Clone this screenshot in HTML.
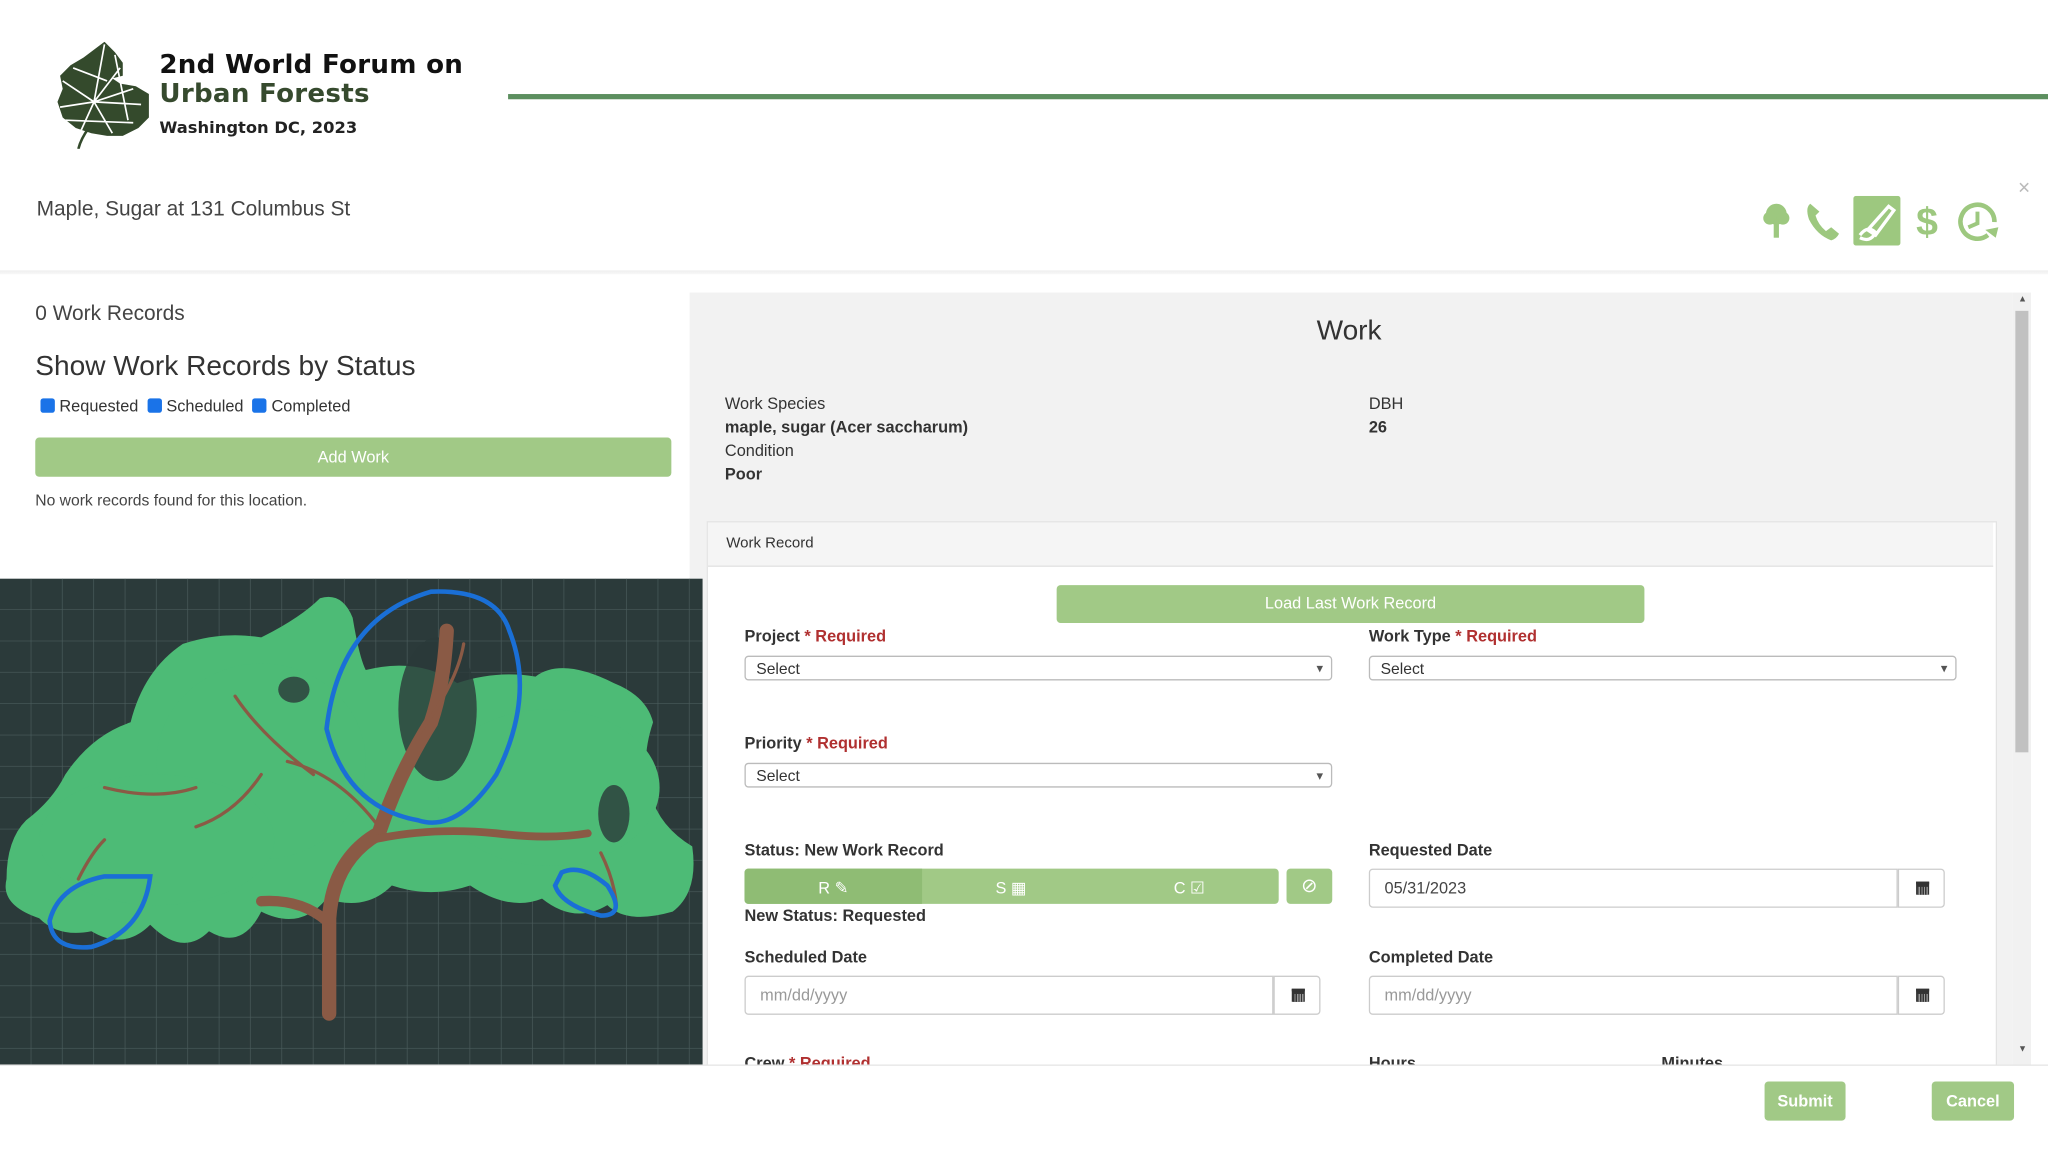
<!DOCTYPE html>
<html><head><meta charset="utf-8"><style>
html,body{margin:0;padding:0;background:#fff;overflow:hidden;width:2048px;height:1152px}
#s{position:absolute;left:0;top:0;width:1568px;height:882px;transform:scale(1.306122);transform-origin:0 0;font-family:"Liberation Sans",Arial,sans-serif;color:#333}
.a{position:absolute}
.lbl{font-size:12.5px;font-weight:bold;color:#333}
.req{color:#b03030}
.sel{position:absolute;height:19px;border:1px solid #bbb;border-radius:3px;background:#fff;font-size:12px;line-height:19px;padding-left:8px;box-sizing:border-box;color:#333}
.sel:after{content:"▾";position:absolute;right:6px;top:0;font-size:10px;color:#555}
.inp{position:absolute;height:30px;border:1px solid #ccc;border-radius:3px 0 0 3px;background:#fff;font-size:12.5px;line-height:28px;padding-left:11px;box-sizing:border-box;color:#555}
.cal{position:absolute;width:36px;height:30px;border:1px solid #ccc;border-radius:0 3px 3px 0;background:#fff;box-sizing:border-box}
.cal i{position:absolute;left:13px;top:9px;width:10px;height:10px;background:#333;border-top:2px solid #333;box-sizing:border-box}
.cal i:after{content:"";position:absolute;left:1px;top:2px;width:8px;height:6px;background:repeating-linear-gradient(90deg,#333 0 1px,#999 1px 2px)}
.btn{position:absolute;background:#a1c986;color:#fff;font-size:12.5px;text-align:center;border-radius:3px}
</style></head><body><div id="s">
<!-- logo -->
<svg class="a" style="left:42px;top:32px" width="74" height="82" viewBox="0 0 74 82">
<path d="M22 12 L30 6 L38 0 L46 8 L52 16 L52 26 L44 28 L50 32 L62 34 L72 40 L72 58 L64 66 L52 72 L40 72 L28 70 L16 66 L6 58 L2 46 L6 36 L4 26 L12 18 Z" fill="#344a2c"/>
<g stroke="#fff" stroke-width="1.3" fill="none"><path d="M30 46 L38 2 M30 46 L6 30 M30 46 L4 50 M30 46 L20 68 M30 46 L44 70 M30 46 L66 48 M30 46 L60 36 M30 46 L50 20 M14 20 L40 30 M8 60 L60 62 M46 10 L56 60"/></g>
<path d="M26 66 Q20 74 18 82" stroke="#344a2c" stroke-width="2" fill="none"/></svg>
<div class="a" style="left:122px;top:38px;font-size:20px;font-weight:900;color:#111;font-family:'DejaVu Sans',sans-serif;line-height:22px;letter-spacing:.2px">2nd World Forum on<br><span style="color:#364a2e">Urban Forests</span></div>
<div class="a" style="left:122px;top:90px;font-size:12.5px;font-weight:bold;color:#222;font-family:'DejaVu Sans',sans-serif">Washington DC, 2023</div>
<div class="a" style="left:389px;top:72px;width:1179px;height:4px;background:#5c8f5f"></div>
<div class="a" style="left:28px;top:152px;font-size:16px;color:#444">Maple, Sugar at 131 Columbus St</div>
<!-- icons -->
<svg class="a" style="left:1346px;top:150px" width="190" height="40" viewBox="0 0 190 40" fill="#9dc87f">
<circle cx="14" cy="14" r="8"/><circle cx="9" cy="17" r="5"/><circle cx="19" cy="17" r="5"/><rect x="12" y="18" width="4" height="14"/>
<path d="M40 6 Q36 9 39 18 Q45 30 56 34 Q60 33 62 29 L56 24 L52 27 Q46 22 44 15 L47 12 Z"/>
<rect x="73" y="0" width="36" height="38" rx="2"/>
<g stroke="#fff" stroke-width="2.5" fill="none"><path d="M84 26 L100 8 L104 11 L90 30 Z"/><path d="M78 30 Q84 22 90 28 Q86 36 78 32"/></g>
<text x="121" y="30" font-size="30" font-weight="bold" font-family="Liberation Sans">$</text>
<path d="M181 20 A13 13 0 1 0 176 30" stroke="#9dc87f" stroke-width="3.5" fill="none"/><path d="M174 26 L182 32 L184 24 Z"/><path d="M168 12 L168 21 L161 24" stroke="#9dc87f" stroke-width="3" fill="none"/>
</svg>
<div class="a" style="left:1545px;top:136px;font-size:16px;color:#bbb">×</div>
<div class="a" style="left:0;top:207px;width:1568px;height:3px;background:linear-gradient(#eee,#f8f8f8)"></div>
<!-- left -->
<div class="a" style="left:27px;top:232px;font-size:16px;color:#444">0 Work Records</div>
<div class="a" style="left:27px;top:268px;font-size:21.5px;color:#333">Show Work Records by Status</div>
<div class="a" style="left:31px;top:303px;font-size:12.5px;color:#333;line-height:16px">
<span style="display:inline-block;width:11px;height:11px;background:#1a73e8;border-radius:2px;vertical-align:-1px"></span> Requested &nbsp;<span style="display:inline-block;width:11px;height:11px;background:#1a73e8;border-radius:2px;vertical-align:-1px"></span> Scheduled &nbsp;<span style="display:inline-block;width:11px;height:11px;background:#1a73e8;border-radius:2px;vertical-align:-1px"></span> Completed</div>
<div class="btn" style="left:27px;top:335px;width:487px;height:30px;line-height:30px">Add Work</div>
<div class="a" style="left:27px;top:376px;font-size:12px;color:#444">No work records found for this location.</div>
<!-- right panel -->
<div class="a" style="left:528px;top:224px;width:1013px;height:591px;background:#f2f2f2"></div>
<div class="a" style="left:1541px;top:224px;width:14px;height:591px;background:#f1f1f1"></div>
<div class="a" style="left:1543px;top:238px;width:10px;height:338px;background:#c1c1c1"></div>
<div class="a" style="left:1545px;top:226px;font-size:7px;color:#555">▲</div>
<div class="a" style="left:1545px;top:800px;font-size:7px;color:#555">▼</div>
<div class="a" style="left:1008px;top:241px;font-size:21.5px;color:#333">Work</div>
<div class="a" style="left:555px;top:300px;font-size:12.5px;line-height:18px">Work Species<br><b>maple, sugar (Acer saccharum)</b><br>Condition<br><b>Poor</b></div>
<div class="a" style="left:1048px;top:300px;font-size:12.5px;line-height:18px">DBH<br><b>26</b></div>
<div class="a" style="left:541px;top:399px;width:986px;height:420px;background:#fff;border:1px solid #e3e3e3"></div>
<div class="a" style="left:542px;top:400px;width:984px;height:33px;background:#f5f5f5;border-bottom:1px solid #e3e3e3"></div>
<div class="a" style="left:556px;top:410px;font-size:11.5px;color:#333">Work Record</div>
<div class="btn" style="left:809px;top:448px;width:450px;height:29px;line-height:29px">Load Last Work Record</div>
<div class="a lbl" style="left:570px;top:480px">Project <span class="req">* Required</span></div>
<div class="a lbl" style="left:1048px;top:480px">Work Type <span class="req">* Required</span></div>
<div class="sel" style="left:570px;top:502px;width:450px">Select</div>
<div class="sel" style="left:1048px;top:502px;width:450px">Select</div>
<div class="a lbl" style="left:570px;top:562px">Priority <span class="req">* Required</span></div>
<div class="sel" style="left:570px;top:584px;width:450px">Select</div>
<div class="a lbl" style="left:570px;top:644px">Status: New Work Record</div>
<div class="a lbl" style="left:1048px;top:644px">Requested Date</div>
<div class="btn" style="left:570px;top:665px;width:409px;height:27px"></div>
<div class="a" style="left:570px;top:665px;width:136px;height:27px;background:#8fbc74;border-radius:3px 0 0 3px"></div>
<div class="a" style="left:570px;top:672px;width:136px;text-align:center;color:#fff;font-size:12.5px">R ✎</div>
<div class="a" style="left:706px;top:672px;width:136px;text-align:center;color:#fff;font-size:12.5px">S ▦</div>
<div class="a" style="left:842px;top:672px;width:137px;text-align:center;color:#fff;font-size:12.5px">C ☑</div>
<div class="btn" style="left:985px;top:665px;width:35px;height:27px;line-height:27px;font-size:15px">⊘</div>
<div class="a lbl" style="left:570px;top:694px">New Status: Requested</div>
<div class="inp" style="left:1048px;top:665px;width:405px;color:#444">05/31/2023</div><div class="cal" style="left:1453px;top:665px"><i></i></div>
<div class="a lbl" style="left:570px;top:726px">Scheduled Date</div>
<div class="a lbl" style="left:1048px;top:726px">Completed Date</div>
<div class="inp" style="left:570px;top:747px;width:405px;color:#999">mm/dd/yyyy</div><div class="cal" style="left:975px;top:747px"><i></i></div>
<div class="inp" style="left:1048px;top:747px;width:405px;color:#999">mm/dd/yyyy</div><div class="cal" style="left:1453px;top:747px"><i></i></div>
<div class="a lbl" style="left:570px;top:807px">Crew <span class="req">* Required</span></div>
<div class="a lbl" style="left:1048px;top:807px">Hours</div>
<div class="a lbl" style="left:1272px;top:807px">Minutes</div>
<!-- tree (over panel) -->
<svg class="a" style="left:0;top:443px" width="538" height="372" viewBox="0 0 538 372">
<defs><pattern id="g" width="24" height="24" patternUnits="userSpaceOnUse"><path d="M24 0V24H0" stroke="#4a5c5c" stroke-width="1" fill="none"/></pattern></defs>
<rect width="538" height="372" fill="#2b3a3a"/><rect width="538" height="372" fill="url(#g)"/>
<g fill="#4dbb76">
<path d="M5 230 Q5 200 20 185 Q40 170 50 150 Q70 120 100 110 Q110 70 140 50 Q170 40 200 45 Q230 30 245 15 Q262 10 270 30 Q275 60 280 70 Q320 60 350 80 Q380 70 410 75 Q430 60 470 80 Q495 90 500 110 Q490 140 498 165 Q505 190 530 205 Q535 240 515 255 Q480 265 465 250 Q440 265 415 245 Q390 255 360 235 Q330 245 300 235 Q280 255 250 245 Q230 270 200 255 Q185 285 160 270 Q140 290 115 265 Q95 285 70 270 Q45 275 30 260 Q0 250 5 230Z"/>
<ellipse cx="200" cy="140" rx="80" ry="75"/><ellipse cx="420" cy="160" rx="85" ry="60"/><ellipse cx="120" cy="200" rx="90" ry="50"/>
</g>
<g fill="#2b3a3a" opacity=".8"><ellipse cx="335" cy="100" rx="30" ry="55"/><ellipse cx="470" cy="180" rx="12" ry="22"/><ellipse cx="225" cy="85" rx="12" ry="10"/></g>
<g stroke="#8a5a45" fill="none" stroke-linecap="round">
<path d="M252 333 L252 260 Q255 215 290 195 Q305 150 330 110 Q340 80 342 40" stroke-width="11"/>
<path d="M250 262 Q230 245 200 247" stroke-width="8"/><path d="M285 200 Q330 190 380 195 Q420 200 450 195" stroke-width="6"/>
<path d="M290 190 Q260 150 220 140 M240 150 Q200 120 180 90 M320 120 Q350 80 355 50 M150 160 Q120 170 80 160 M60 230 Q70 210 80 200 M460 210 Q470 230 472 250 M200 150 Q180 180 150 190" stroke-width="2.5"/>
</g>
<g stroke="#1a6fd6" stroke-width="3.5" fill="none">
<path d="M330 10 Q380 8 390 40 Q410 90 380 150 Q350 195 320 185 Q265 175 250 115 Q260 30 330 10Z"/>
<path d="M115 228 Q110 270 70 282 Q40 285 38 262 Q45 235 80 228Z"/>
<path d="M430 225 Q445 218 465 235 Q480 258 460 258 Q430 250 425 235Z"/>
</g></svg>
<!-- footer -->
<div class="a" style="left:0;top:815px;width:1568px;height:67px;background:#fff;border-top:1px solid #e5e5e5"></div>
<div class="btn" style="left:1351px;top:828px;width:62px;height:30px;line-height:30px;font-weight:bold">Submit</div>
<div class="btn" style="left:1479px;top:828px;width:63px;height:30px;line-height:30px;font-weight:bold">Cancel</div>
</div></body></html>
